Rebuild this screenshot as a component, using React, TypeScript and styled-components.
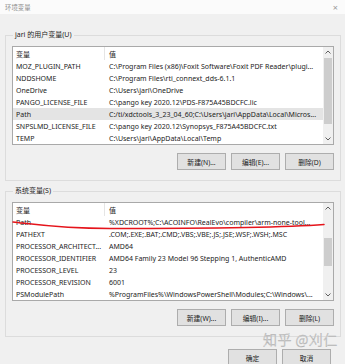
import styled, { createGlobalStyle } from "styled-components";

const GlobalStyle = createGlobalStyle`
  html, body {
    margin: 0;
    padding: 0;
    background: #f0f0f0;
  }
  body {
    font-family: "Noto Sans", "Noto Sans CJK SC", sans-serif;
  }
`;

const UI_FONT = `"Noto Sans", "Noto Sans CJK SC", sans-serif`;

type EnvVar = { name: string; value: string; selected?: boolean };

const userVars: EnvVar[] = [
  { name: "MOZ_PLUGIN_PATH", value: "C:\\Program Files (x86)\\Foxit Software\\Foxit PDF Reader\\plugi..." },
  { name: "NDDSHOME", value: "C:\\Program Files\\rti_connext_dds-6.1.1" },
  { name: "OneDrive", value: "C:\\Users\\jari\\OneDrive" },
  { name: "PANGO_LICENSE_FILE", value: "C:\\pango key 2020.12\\PDS-F875A45BDCFC.lic" },
  { name: "Path", value: "C:/ti/xdctools_3_23_04_60;C:\\Users\\jari\\AppData\\Local\\Micros...", selected: true },
  { name: "SNPSLMD_LICENSE_FILE", value: "C:\\pango key 2020.12\\Synopsys_F875A45BDCFC.txt" },
  { name: "TEMP", value: "C:\\Users\\jari\\AppData\\Local\\Temp" },
];

const systemVars: EnvVar[] = [
  { name: "Path", value: "%XDCROOT%;C:\\ACOINFO\\RealEvo\\compiler\\arm-none-tool..." },
  { name: "PATHEXT", value: ".COM;.EXE;.BAT;.CMD;.VBS;.VBE;.JS;.JSE;.WSF;.WSH;.MSC" },
  { name: "PROCESSOR_ARCHITECT...", value: "AMD64" },
  { name: "PROCESSOR_IDENTIFIER", value: "AMD64 Family 23 Model 96 Stepping 1, AuthenticAMD" },
  { name: "PROCESSOR_LEVEL", value: "23" },
  { name: "PROCESSOR_REVISION", value: "6001" },
  { name: "PSModulePath", value: "%ProgramFiles%\\WindowsPowerShell\\Modules;C:\\Windows\\..." },
];

const Window = styled.div`
  position: relative;
  width: 345px;
  height: 364px;
  overflow: hidden;
  background: #f0f0f0;
  font-family: ${UI_FONT};
  color: #1c1c1c;
`;

const TitleBar = styled.div`
  height: 14px;
  background: #fbfbfb;
  display: flex;
  align-items: center;
  justify-content: space-between;
  padding: 0 7px 0 5px;
`;

const Title = styled.span`
  font-size: 6.4px;
  color: #8c8c8c;
`;

const CloseGlyph = styled.span`
  font-size: 9px;
  color: #9a9a9a;
  line-height: 1;
`;

const Body = styled.div`
  padding: 16px 4px 0 5px;
  display: flex;
  flex-direction: column;
`;

const Group = styled.fieldset<{ $top?: number }>`
  margin: ${(p) => p.$top ?? 0}px 0 0 0;
  padding: 6px 6px 10px 6px;
  border: 1px solid #dcdcdc;
  min-width: 0;
`;

const Legend = styled.legend`
  padding: 0 2px;
  margin-left: 1px;
  font-size: 7px;
  line-height: 10px;
  color: #1c1c1c;
`;

const ListBox = styled.div`
  height: 99px;
  box-sizing: border-box;
  border: 1px solid #a9a9a9;
  background: #fff;
  display: flex;
`;

const Table = styled.div`
  flex: 1;
  min-width: 0;
  display: flex;
  flex-direction: column;
`;

const HeaderRow = styled.div`
  height: 13px;
  display: flex;
  align-items: stretch;
  font-size: 7px;
`;

const Row = styled.div<{ $selected?: boolean }>`
  height: 12px;
  display: flex;
  align-items: center;
  font-size: 7px;
  background: ${(p) => (p.$selected ? "#e4e4e4" : "transparent")};
`;

const NameCell = styled.div<{ $header?: boolean }>`
  width: 92px;
  flex: none;
  padding-left: 3px;
  box-sizing: border-box;
  white-space: nowrap;
  overflow: hidden;
  display: flex;
  align-items: center;
  border-right: 1px solid ${(p) => (p.$header ? "#e5e5e5" : "transparent")};
`;

const ValueCell = styled.div`
  flex: 1;
  min-width: 0;
  padding-left: 4px;
  white-space: nowrap;
  overflow: hidden;
  display: flex;
  align-items: center;
`;

const ScrollBar = styled.div`
  width: 10px;
  flex: none;
  background: #f0f0f0;
  display: flex;
  flex-direction: column;
`;

const ScrollArrow = styled.div`
  height: 10px;
  display: flex;
  align-items: center;
  justify-content: center;
`;

const Track = styled.div`
  flex: 1;
  display: flex;
  flex-direction: column;
  align-items: center;
`;

const Thumb = styled.div<{ $offset: number; $size: number }>`
  margin-top: ${(p) => p.$offset}px;
  height: ${(p) => p.$size}px;
  width: 8px;
  background: #cdcdcd;
`;

const ButtonRow = styled.div<{ $gapTop?: number; $right?: number }>`
  display: flex;
  justify-content: flex-end;
  gap: 5px;
  margin-top: ${(p) => p.$gapTop ?? 8}px;
  margin-right: ${(p) => p.$right ?? 0}px;
`;

const Button = styled.div`
  width: 49px;
  height: 17px;
  box-sizing: border-box;
  border: 1px solid #adadad;
  background: #e1e1e1;
  display: flex;
  align-items: center;
  justify-content: center;
  font-size: 6.8px;
  color: #1c1c1c;
`;

const Watermark = styled.div`
  position: absolute;
  left: 263px;
  top: 330px;
  font-family: "Noto Sans CJK SC", sans-serif;
  font-size: 14px;
  font-weight: 300;
  letter-spacing: 0.5px;
  color: #ffffff;
  -webkit-text-stroke: 0.5px #b2b2b2;
  line-height: 18px;
`;

const Annotation = styled.svg`
  position: absolute;
  left: 0;
  top: 0;
  pointer-events: none;
`;

const Chevron = ({ up }: { up?: boolean }) => (
  <svg width="6" height="4" viewBox="0 0 6 4">
    <polyline
      points={up ? "0.5,3.5 3,1 5.5,3.5" : "0.5,0.5 3,3 5.5,0.5"}
      fill="none"
      stroke="#606060"
      strokeWidth="1"
    />
  </svg>
);

const VarList = ({
  items,
  thumbOffset,
  thumbSize,
}: {
  items: EnvVar[];
  thumbOffset: number;
  thumbSize: number;
}) => (
  <ListBox>
    <Table>
      <HeaderRow>
        <NameCell $header>变量</NameCell>
        <ValueCell>值</ValueCell>
      </HeaderRow>
      {items.map((item) => (
        <Row key={item.name} $selected={item.selected}>
          <NameCell>{item.name}</NameCell>
          <ValueCell>{item.value}</ValueCell>
        </Row>
      ))}
    </Table>
    <ScrollBar>
      <ScrollArrow>
        <Chevron up />
      </ScrollArrow>
      <Track>
        <Thumb $offset={thumbOffset} $size={thumbSize} />
      </Track>
      <ScrollArrow>
        <Chevron />
      </ScrollArrow>
    </ScrollBar>
  </ListBox>
);

export default function App() {
  return (
    <>
      <GlobalStyle />
      <Window>
        <TitleBar>
          <Title>环境变量</Title>
          <CloseGlyph>×</CloseGlyph>
        </TitleBar>
        <Body>
          <Group>
            <Legend>jari 的用户变量(U)</Legend>
            <VarList items={userVars} thumbOffset={1} thumbSize={66} />
            <ButtonRow>
              <Button>新建(N)...</Button>
              <Button>编辑(E)...</Button>
              <Button>删除(D)</Button>
            </ButtonRow>
          </Group>
          <Group $top={5}>
            <Legend>系统变量(S)</Legend>
            <VarList items={systemVars} thumbOffset={25} thumbSize={28} />
            <ButtonRow>
              <Button>新建(W)...</Button>
              <Button>编辑(I)...</Button>
              <Button>删除(L)</Button>
            </ButtonRow>
          </Group>
          <ButtonRow $gapTop={12} $right={10}>
            <Button>确定</Button>
            <Button>取消</Button>
          </ButtonRow>
        </Body>
        <Watermark>知乎 @刈仁</Watermark>
        <Annotation width="345" height="364" viewBox="0 0 345 364">
          <path
            d="M13 222 C 40 225, 62 228.5, 110 228.5 S 280 228, 324 224.5"
            fill="none"
            stroke="#e5141b"
            strokeWidth="1.5"
            strokeLinecap="round"
          />
        </Annotation>
      </Window>
    </>
  );
}
